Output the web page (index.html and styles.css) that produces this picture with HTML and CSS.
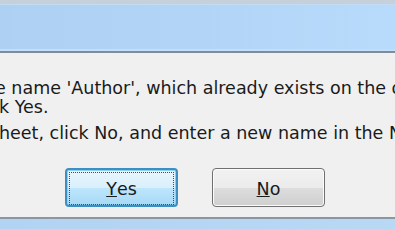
FILE: index.html
```html
<!DOCTYPE html>
<html>
<head>
<meta charset="utf-8">
<link rel="stylesheet" href="styles.css">
</head>
<body>
<div class="window">
  <div class="titlebar"></div>
  <div class="message">
    <div class="line l1">e name 'Author', which already exists on the d</div>
    <div class="line l2">k Yes.</div>
    <div class="line l3">heet, click No, and enter a new name in the N</div>
  </div>
  <div class="buttons">
    <button class="btn default"><span class="focus"><u>Y</u>es</span></button>
    <button class="btn"><span class="focus"><u>N</u>o</span></button>
  </div>
  <div class="taskbar"></div>
</div>
</body>
</html>
```
FILE: styles.css
```css
html, body {
  margin: 0;
  padding: 0;
}
body {
  width: 395px;
  height: 229px;
  overflow: hidden;
  background: #f0f0f0;
  font-family: "DejaVu Sans", sans-serif;
}
.window {
  display: flex;
  flex-direction: column;
  height: 229px;
}
.titlebar {
  height: 47px;
  border-top: 4px solid #c6d0db;
  border-bottom: 2px solid #7f8d9b;
  background: linear-gradient(to right, #aed1f3 0%, #b2d5f7 50%, #b8dbfc 100%);
  box-shadow: inset 0 1px 0 #c3dcf3, inset 0 -2px 0 #c3def6;
}
.message {
  padding-top: 26px;
  color: #1a1a1a;
  font-size: 17.5px;
  line-height: 19px;
  overflow: hidden;
}
.line {
  white-space: nowrap;
}
.l1 { margin-left: -5px; }
.l2 { margin-left: -1px; }
.l3 { margin-left: -1px; margin-top: 7px; }
.buttons {
  display: flex;
  padding-left: 65px;
  gap: 34px;
  margin-top: 25px;
}
.btn {
  width: 113px;
  height: 39px;
  padding: 3px;
  border: 1px solid #707070;
  border-radius: 4px;
  background: linear-gradient(to bottom, #f2f2f2 0%, #ebebeb 50%, #dddddd 51%, #cfcfcf 100%);
  font-family: inherit;
  font-size: 17.5px;
  color: #1a1a1a;
  box-shadow: inset 0 0 0 1px #fbfbfb;
}
.btn .focus {
  display: flex;
  align-items: center;
  justify-content: center;
  height: 100%;
  border: 1px dotted transparent;
}
.btn.default {
  border: 2px solid #3c8fc4;
  box-shadow: inset 0 0 0 1px #8fd0ef;
  background: linear-gradient(to bottom, #eaf6fd 0%, #d9f0fc 50%, #bee6fd 51%, #a7d9f5 100%);
  padding: 2px;
}
.btn.default .focus {
  border: 1px dotted #4a4a4a;
}
.taskbar {
  margin-top: auto;
  height: 10px;
  border-top: 2px solid #8a96a2;
  background: linear-gradient(to right, #b2d3f1, #b9d8f4);
}
```
